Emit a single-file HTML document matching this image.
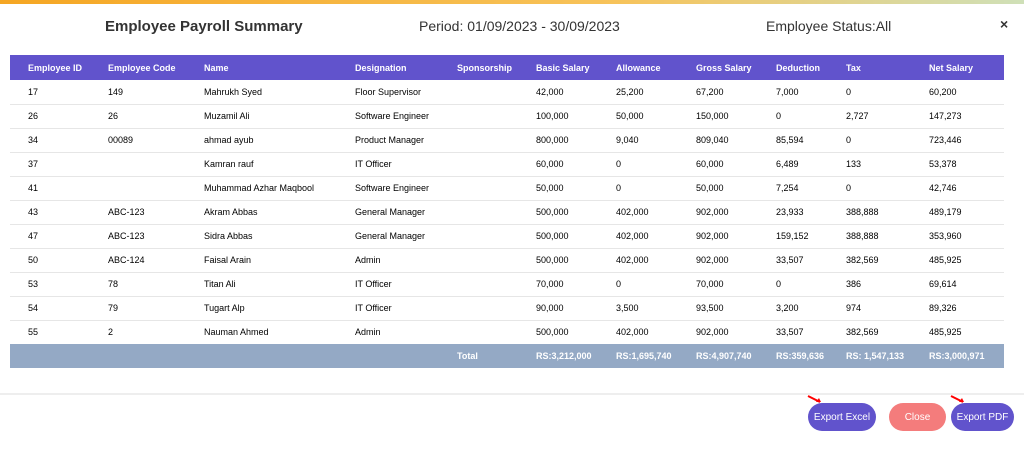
<!DOCTYPE html>
<html><head><style>
body{margin:0;width:1024px;height:468px;background:#fff;font-family:"Liberation Sans",sans-serif;position:relative;overflow:hidden}
.top{position:absolute;left:0;top:0;width:1024px;height:4px;background:linear-gradient(90deg,#f5a623,#f7c35a 60%,#cfe0b8)}
.h{position:absolute;top:18px;font-size:14px;color:#333}
table{position:absolute;left:10px;top:55px;width:994px;border-collapse:collapse;font-size:9px;color:#555}
td{position:absolute;white-space:nowrap}
.r{position:absolute;left:10px;width:994px;height:24px;border-bottom:1px solid #e6e6e6}
.r span{position:absolute;top:7px;font-size:9px;white-space:nowrap}
.hd{background:#6153cc;color:#fff;font-weight:bold;height:25px;border:none}
.hd span{top:8px}
.tot{background:#94a9c5;color:#fff;font-weight:bold;border:none}
.btn{position:absolute;top:403px;height:28px;border-radius:14px;color:#fff;font-size:10px;display:flex;align-items:center;justify-content:center}
</style></head><body>
<div class="top"></div>
<div class="h" style="left:105px;font-weight:bold;font-size:15px">Employee Payroll Summary</div>
<div class="h" style="left:419px">Period: 01/09/2023 - 30/09/2023</div>
<div class="h" style="left:766px">Employee Status:All</div>
<div class="h" style="left:1000px;font-weight:bold;top:16px">×</div>
<div id="t"></div>
<div style="position:absolute;left:0;top:393px;width:1024px;height:2px;background:#eee"></div>
<div class="btn" style="left:808px;width:68px;background:#6153cc">Export Excel</div>
<div class="btn" style="left:889px;width:57px;background:#f47c7c">Close</div>
<div class="btn" style="left:951px;width:63px;background:#6153cc">Export PDF</div>
<svg style="position:absolute;left:806px;top:394px" width="18" height="10"><path d="M2 2 L14 8" stroke="red" stroke-width="2"/><path d="M10 8 L15 8 L13 4" fill="red"/></svg>
<svg style="position:absolute;left:949px;top:394px" width="18" height="10"><path d="M2 2 L14 8" stroke="red" stroke-width="2"/><path d="M10 8 L15 8 L13 4" fill="red"/></svg>
<script>
var xs=[18,98,194,345,447,526,606,686,766,836,919];
var rows=[["Employee ID","Employee Code","Name","Designation","Sponsorship","Basic Salary","Allowance","Gross Salary","Deduction","Tax","Net Salary"],
["17","149","Mahrukh Syed","Floor Supervisor","","42,000","25,200","67,200","7,000","0","60,200"],
["26","26","Muzamil Ali","Software Engineer","","100,000","50,000","150,000","0","2,727","147,273"],
["34","00089","ahmad ayub","Product Manager","","800,000","9,040","809,040","85,594","0","723,446"],
["37","","Kamran rauf","IT Officer","","60,000","0","60,000","6,489","133","53,378"],
["41","","Muhammad Azhar Maqbool","Software Engineer","","50,000","0","50,000","7,254","0","42,746"],
["43","ABC-123","Akram Abbas","General Manager","","500,000","402,000","902,000","23,933","388,888","489,179"],
["47","ABC-123","Sidra Abbas","General Manager","","500,000","402,000","902,000","159,152","388,888","353,960"],
["50","ABC-124","Faisal Arain","Admin","","500,000","402,000","902,000","33,507","382,569","485,925"],
["53","78","Titan Ali","IT Officer","","70,000","0","70,000","0","386","69,614"],
["54","79","Tugart Alp","IT Officer","","90,000","3,500","93,500","3,200","974","89,326"],
["55","2","Nauman Ahmed","Admin","","500,000","402,000","902,000","33,507","382,569","485,925"],
["","","","","Total","RS:3,212,000","RS:1,695,740","RS:4,907,740","RS:359,636","RS: 1,547,133","RS:3,000,971"]];
var h="";rows.forEach(function(r,i){var top=i==0?55:(i<12?80+(i-1)*24:344);var c=i==0?"r hd":(i==12?"r tot":"r");
h+='<div class="'+c+'" style="top:'+top+'px">';r.forEach(function(v,j){h+='<span style="left:'+xs[j]+'px">'+v+'</span>'});h+='</div>'});
document.getElementById("t").innerHTML=h;
</script>
</body></html>
